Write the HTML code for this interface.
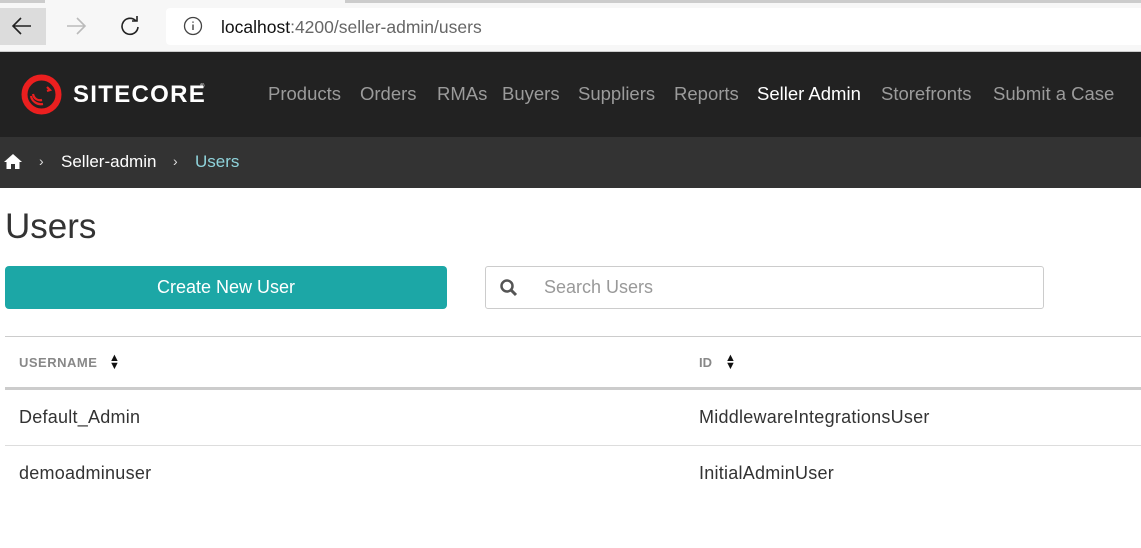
<!DOCTYPE html>
<html><head><style>
*{margin:0;padding:0;box-sizing:border-box}
body{width:1141px;height:548px;overflow:hidden;background:#fff;font-family:"Liberation Sans",sans-serif;position:relative}
.abs{position:absolute}
.nav a{position:absolute;top:83px;font-size:18.5px;color:#9b9b9b}
.row{font-size:18px;color:#333;letter-spacing:0.25px}
</style></head><body>
<div class="abs" style="left:0;top:0;width:1141px;height:52px;background:#f7f7f7;border-bottom:1px solid #ccc"></div>
<div class="abs" style="left:0;top:0;width:45px;height:3px;background:#ccc"></div>
<div class="abs" style="left:345px;top:0;width:796px;height:3px;background:#ccc"></div>
<div class="abs" style="left:0;top:8px;width:46px;height:37px;background:#dcdcdc"></div>
<svg class="abs" style="left:10px;top:15px" width="24" height="22" viewBox="0 0 24 22"><path d="M21 11H3M11 3 3 11l8 8" stroke="#222" stroke-width="1.6" fill="none"/></svg>
<svg class="abs" style="left:64px;top:15px" width="24" height="22" viewBox="0 0 24 22"><path d="M3 11h18M13 3l8 8-8 8" stroke="#bbb" stroke-width="1.6" fill="none"/></svg>
<svg class="abs" style="left:119px;top:15px" width="22" height="22" viewBox="0 0 22 22"><path d="M17 6A8 8 0 1 0 19 12" stroke="#222" stroke-width="1.6" fill="none"/><path d="M13 6h5V1" stroke="#222" stroke-width="1.6" fill="none"/></svg>
<div class="abs" style="left:166px;top:8px;width:975px;height:37px;background:#fff;border-radius:4px 0 0 4px"></div>
<svg class="abs" style="left:183px;top:16px" width="20" height="20" viewBox="0 0 20 20"><circle cx="10" cy="10" r="8.5" stroke="#444" stroke-width="1.3" fill="none"/><path d="M10 8.5v5.5M10 5.5v1.3" stroke="#444" stroke-width="1.4"/></svg>
<div class="abs" style="left:221px;top:17px;font-size:17.5px;color:#111">localhost<span style="color:#666">:4200/seller-admin/users</span></div>
<div class="abs" style="left:0;top:52px;width:1141px;height:85px;background:#222"></div>
<svg class="abs" style="left:21px;top:74px" width="41" height="41" viewBox="0 0 41 41"><circle cx="20.5" cy="20.5" r="17" stroke="#eb1f1f" stroke-width="6" fill="none"/><path d="M10 22c1 6 7 9 12 8M12 20c1 5 5 7 9 6M26 13l3 3-3 1" stroke="#eb1f1f" stroke-width="2.2" fill="none"/></svg>
<div class="abs" style="left:73px;top:81px;font-size:24px;font-weight:bold;color:#fff;letter-spacing:1.3px">SITECORE</div>
<div class="abs" style="left:200px;top:84px;font-size:6px;color:#fff">®</div>
<div class="nav">
<a style="left:268px">Products</a><a style="left:360px">Orders</a><a style="left:437px">RMAs</a><a style="left:502px">Buyers</a><a style="left:578px">Suppliers</a><a style="left:674px">Reports</a><a style="left:757px;color:#fff">Seller Admin</a><a style="left:881px">Storefronts</a><a style="left:993px">Submit a Case</a>
</div>
<div class="abs" style="left:0;top:137px;width:1141px;height:51px;background:#333"></div>
<svg class="abs" style="left:4px;top:154px" width="18" height="15" viewBox="0 0 18 15"><path d="M9 0 0 8h2.5v7h4.5v-5h4v5h4.5V8H18z" fill="#fff"/></svg>
<div class="abs" style="left:39px;top:153px;font-size:14px;color:#ddd">›</div>
<div class="abs" style="left:61px;top:152px;font-size:17px;color:#fff">Seller-admin</div>
<div class="abs" style="left:173px;top:153px;font-size:14px;color:#ddd">›</div>
<div class="abs" style="left:195px;top:152px;font-size:17px;color:#8fd3db">Users</div>
<div class="abs" style="left:5px;top:207px;font-size:35px;color:#333">Users</div>
<div class="abs" style="left:5px;top:266px;width:442px;height:43px;background:#1ca7a6;border-radius:4px;color:#fff;font-size:18px;text-align:center;line-height:43px">Create New User</div>
<div class="abs" style="left:485px;top:266px;width:559px;height:43px;border:1px solid #ccc;border-radius:3px"></div>
<svg class="abs" style="left:499px;top:278px" width="20" height="20" viewBox="0 0 20 20"><circle cx="8" cy="8" r="5.5" stroke="#555" stroke-width="2.5" fill="none"/><path d="M12 12l5 5" stroke="#555" stroke-width="3"/></svg>
<div class="abs" style="left:544px;top:277px;font-size:18px;color:#999">Search Users</div>
<div class="abs" style="left:5px;top:336px;width:1136px;height:1px;background:#ccc"></div>
<div class="abs" style="left:19px;top:355px;font-size:13px;font-weight:bold;color:#888;letter-spacing:0.5px">USERNAME</div>
<div class="abs" style="left:109px;top:354px;font-size:11px;color:#111;line-height:8px">▲<br>▼</div>
<div class="abs" style="left:699px;top:355px;font-size:13px;font-weight:bold;color:#888">ID</div>
<div class="abs" style="left:725px;top:354px;font-size:11px;color:#111;line-height:8px">▲<br>▼</div>
<div class="abs" style="left:5px;top:387px;width:1136px;height:3px;background:#ccc"></div>
<div class="abs row" style="left:19px;top:407px">Default_Admin</div>
<div class="abs row" style="left:699px;top:407px">MiddlewareIntegrationsUser</div>
<div class="abs" style="left:5px;top:445px;width:1136px;height:1px;background:#ddd"></div>
<div class="abs row" style="left:19px;top:463px">demoadminuser</div>
<div class="abs row" style="left:699px;top:463px">InitialAdminUser</div>
</body></html>
